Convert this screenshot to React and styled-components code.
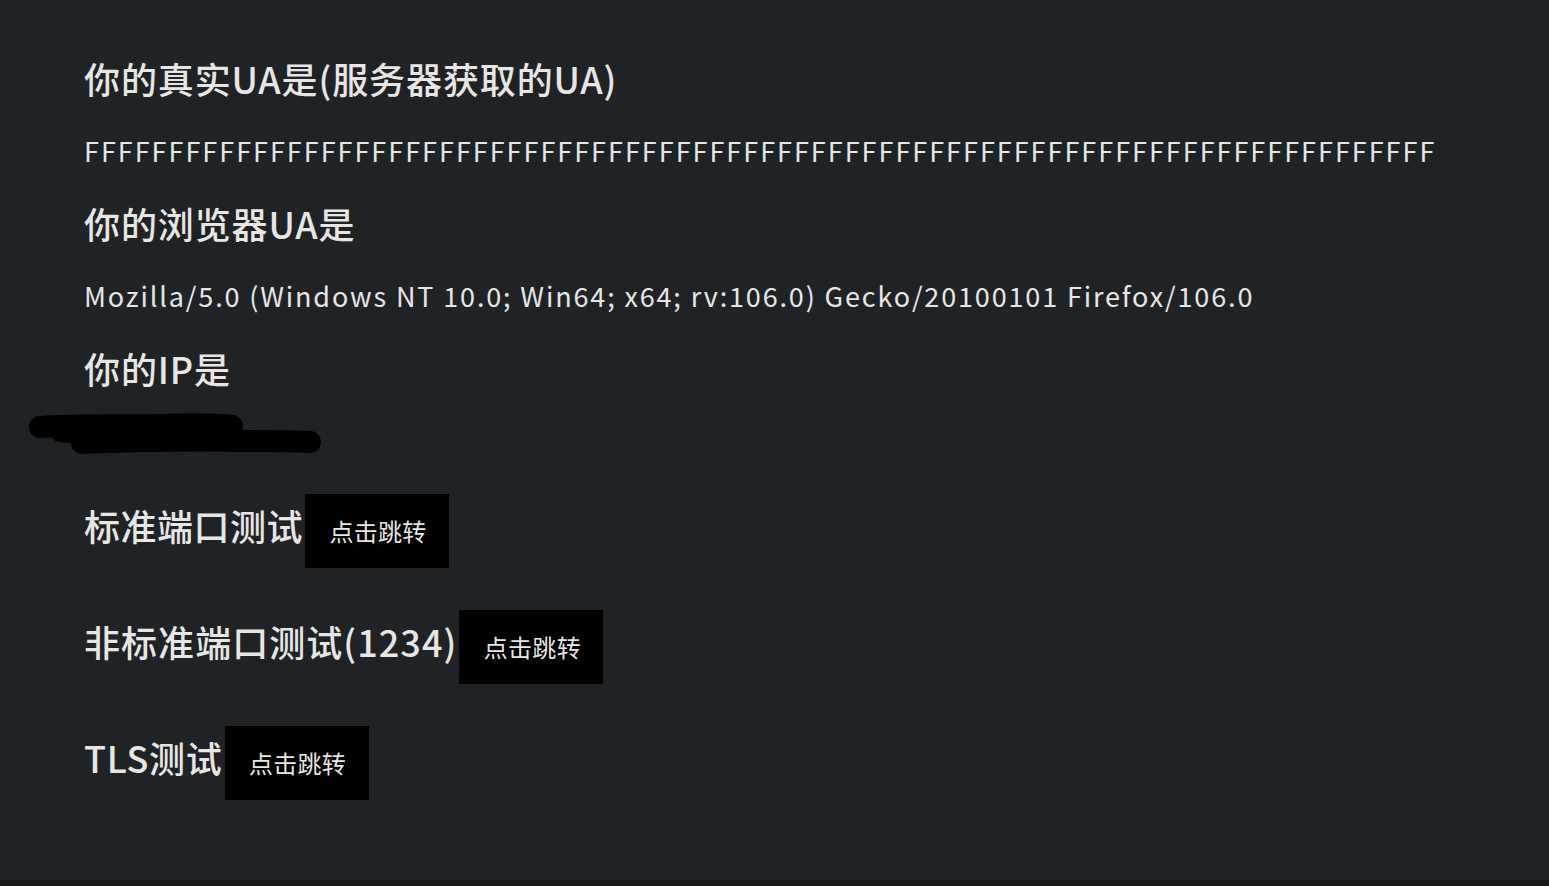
import React from "react";
import styled, { createGlobalStyle } from "styled-components";

const Global = createGlobalStyle`
  html, body { margin: 0; padding: 0; background: #181a1b; }
  body { font-family: "Noto Sans CJK SC", "Noto Sans", sans-serif; color: #e8e6e3; }
`;

const Page = styled.main`
  background: #202326;
  height: 880px;
  box-sizing: border-box;
  padding: 42px 0 0 84px;
  display: flex;
  flex-direction: column;
`;

const Title = styled.h2`
  margin: 0;
  font-size: 36px;
  font-weight: 500;
  letter-spacing: 0.9px;
  line-height: 72px;
  height: 72px;
`;

const Text = styled.p`
  margin: 0;
  font-size: 27px;
  line-height: 73px;
  height: 73px;
  white-space: nowrap;
  letter-spacing: ${(p) => p.$ls || "0px"};
`;

const Redacted = styled.div`
  position: relative;
  height: 63px;
`;

const Scribble = styled.svg`
  position: absolute;
  left: -84px;
  top: 0;
  width: 340px;
  height: 63px;
`;

const Tests = styled.div`
  margin-top: 27px;
  display: flex;
  flex-direction: column;
  gap: 42px;
`;

const Row = styled.div`
  display: flex;
  align-items: baseline;
`;

const RowTitle = styled.span`
  font-size: 36px;
  font-weight: 500;
  letter-spacing: ${(p) => p.$ls || "0.8px"};
  line-height: 36px;
`;

const JumpButton = styled.button`
  margin-left: 2px;
  background: #000;
  color: #e8e6e3;
  border: none;
  width: 144px;
  height: 74px;
  padding: 0 0 0 2px;
  font-family: "Noto Sans CJK SC", sans-serif;
  font-size: 24px;
  letter-spacing: 0.3px;
  line-height: 74px;
  cursor: pointer;
`;

const tests = [
  { t: "标准端口测试", ls: "0.5px" },
  { t: "非标准端口测试(1234)", ls: "1.05px" },
  { t: "TLS测试", ls: "0.7px" },
];

export default function App() {
  return (
    <>
      <Global />
      <Page>
        <Title>你的真实UA是(服务器获取的UA)</Title>
        <Text $ls="2px">{"F".repeat(80)}</Text>
        <Title>你的浏览器UA是</Title>
        <Text $ls="1.85px">Mozilla/5.0 (Windows NT 10.0; Win64; x64; rv:106.0) Gecko/20100101 Firefox/106.0</Text>
        <Title>你的IP是</Title>
        <Redacted>
          <Scribble viewBox="0 0 340 63">
            <path d="M40 23 C 80 20, 130 22, 160 21 C 190 20, 215 20, 232 22" stroke="#000" strokeWidth="22" strokeLinecap="round" fill="none" />
            <path d="M82 39 C 130 37, 200 36, 250 37 C 280 37, 300 37, 310 38" stroke="#000" strokeWidth="22" strokeLinecap="round" fill="none" />
            <path d="M60 28 L 120 34" stroke="#000" strokeWidth="20" strokeLinecap="round" />
          </Scribble>
        </Redacted>
        <Tests>
          {tests.map(({ t, ls }) => (
            <Row key={t}>
              <RowTitle $ls={ls}>{t}</RowTitle>
              <JumpButton>点击跳转</JumpButton>
            </Row>
          ))}
        </Tests>
      </Page>
    </>
  );
}
